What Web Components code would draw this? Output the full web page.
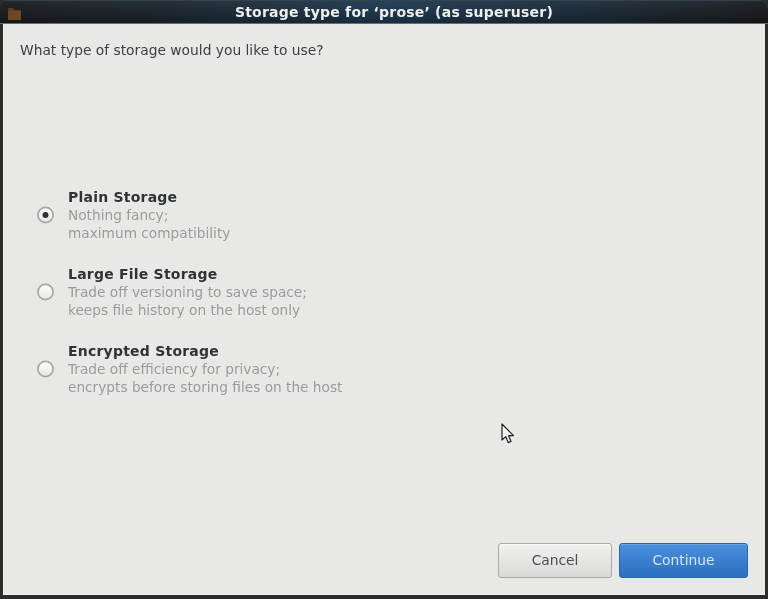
<!DOCTYPE html>
<html>
<head>
<meta charset="utf-8">
<title>Storage type</title>
<style>
  html, body { margin: 0; height: 100%; background: #2c2c2c; overflow: hidden; }
  body { font-family: "DejaVu Sans", sans-serif; }
  dialog-window, mouse-pointer { filter: blur(0.35px); }
</style>
</head>
<body>
<dialog-window heading="Storage type for ‘prose’ (as superuser)">
  <span slot="question">What type of storage would you like to use?</span>
  <storage-option checked label="Plain Storage">
    <span>Nothing fancy;</span>
    <span>maximum compatibility</span>
  </storage-option>
  <storage-option label="Large File Storage">
    <span>Trade off versioning to save space;</span>
    <span>keeps file history on the host only</span>
  </storage-option>
  <storage-option label="Encrypted Storage">
    <span>Trade off efficiency for privacy;</span>
    <span>encrypts before storing files on the host</span>
  </storage-option>
  <push-button slot="actions" style="width:114px">Cancel</push-button>
  <push-button slot="actions" primary style="width:129px">Continue</push-button>
</dialog-window>
<mouse-pointer></mouse-pointer>

<script>
// title bar with the little folder icon
class TitleBar extends HTMLElement {
  constructor() {
    super();
    const shadow = this.attachShadow({ mode: 'open' });
    shadow.innerHTML = `
      <style>
        :host {
          display: flex;
          align-items: center;
          justify-content: center;
          position: relative;
          height: 24px;
          padding-left: 20px;
          box-sizing: border-box;
          border-radius: 6px 8px 0 0;
          background:
            linear-gradient(rgba(255, 255, 255, 0.05), rgba(0, 0, 0, 0.25)),
            linear-gradient(90deg, #1a1c1e 0%, #1b2630 22%, #1e3a54 50%, #1c2d3c 75%, #191b1d 100%);
          box-shadow: inset 0 1px 0 #34444f, inset 0 -1px 0 #6b6e6e;
          color: #eeeeec;
          font: bold 14px "DejaVu Sans", sans-serif;
          letter-spacing: 0.22px;
        }
        svg { position: absolute; left: 7px; top: 6px; }
      </style>
      <svg width="15" height="15" viewBox="0 0 15 15">
        <path d="M1 2h5l1.500 2H14v10H1z" fill="#5c3d20"/>
        <path d="M1 5h13v9H1z" fill="#6d4822"/>
      </svg>
      <span></span>`;
  }

  set heading(text) {
    this.shadowRoot.querySelector('span').textContent = text;
  }
}
customElements.define('title-bar', TitleBar);

const windowTemplate = document.createElement('template');
windowTemplate.innerHTML = `
  <style>
    :host {
      display: block;
      box-sizing: border-box;
      height: 599px;
      background: #2c2c2c;
    }
    .body {
      box-sizing: border-box;
      height: 571px;
      margin: 0 3px;
      padding: 18px 17px 17px 17px;
      display: flex;
      flex-direction: column;
      background: #e8e8e7;
      box-shadow: inset 0 -1px 0 #f4f4f3, inset 1px 0 0 #f2f2f1;
      color: #3a4144;
      font: 13.8px "DejaVu Sans", sans-serif;
    }
    .question { line-height: 17px; height: 17px; }
    .options {
      flex: 1;
      display: flex;
      flex-direction: column;
      gap: 23px;
      padding: 129px 0 0 16px;
    }
    .actions { display: flex; justify-content: flex-end; gap: 7px; }
  </style>
  <title-bar></title-bar>
  <div class="body">
    <div class="question"><slot name="question"></slot></div>
    <div class="options"><slot></slot></div>
    <div class="actions"><slot name="actions"></slot></div>
  </div>
`;

class DialogWindow extends HTMLElement {
  constructor() {
    super();
    const shadow = this.attachShadow({ mode: 'open' });
    shadow.appendChild(windowTemplate.content.cloneNode(true));
    shadow.querySelector('title-bar').heading = this.getAttribute('heading');
  }
}
customElements.define('dialog-window', DialogWindow);

class StorageOption extends HTMLElement {
  constructor() {
    super();
    const shadow = this.attachShadow({ mode: 'open' });
    const dot = this.hasAttribute('checked') ? '<circle cx="9.500" cy="9" r="3" fill="#2e3436"/>' : '';
    shadow.innerHTML = `
      <style>
        :host { display: flex; align-items: center; gap: 14px; }
        svg { flex: none; width: 18px; height: 18px; }
        .text { display: flex; flex-direction: column; line-height: 18px; }
        .label { font-size: 14px; font-weight: bold; color: #2e3436; letter-spacing: 0.22px; }
        .note { display: flex; flex-direction: column; color: #9a9c9c; font-size: 13.7px; }
        ::slotted(span) { display: block; }
      </style>
      <svg viewBox="0 0 18 18">
        <defs>
          <linearGradient id="fill" x1="0" y1="0" x2="0" y2="1">
            <stop offset="0" stop-color="#ffffff"/>
            <stop offset="1" stop-color="#e4e4e2"/>
          </linearGradient>
        </defs>
        <circle cx="9.500" cy="9" r="7.600" fill="url(#fill)" stroke="#a6a8a6" stroke-width="1.700"/>
        ${dot}
      </svg>
      <div class="text">
        <span class="label"></span>
        <div class="note"><slot></slot></div>
      </div>`;
    shadow.querySelector('.label').textContent = this.getAttribute('label');
  }
}
customElements.define('storage-option', StorageOption);

class PushButton extends HTMLElement {
  constructor() {
    super();
    const shadow = this.attachShadow({ mode: 'open' });
    shadow.innerHTML = `
      <style>
        :host {
          display: flex;
          align-items: center;
          justify-content: center;
          box-sizing: border-box;
          height: 35px;
          padding-bottom: 2px;
          border-radius: 3px;
          border: 1px solid #a9aaa8;
          background: linear-gradient(#f1f1f0, #d9d9d7);
          box-shadow: inset 0 1px 0 #fafafa;
          color: #4a5052;
          font: 13.8px "DejaVu Sans", sans-serif;
        }
        :host([primary]) {
          border-color: #2a68ad;
          background: linear-gradient(#4a90dc, #2b6fc0);
          box-shadow: inset 0 1px 0 #6aa5e4;
          color: #d6e6f6;
        }
      </style>
      <slot></slot>`;
  }
}
customElements.define('push-button', PushButton);

// screenshot happened to catch the pointer, it floats over the dialog
class MousePointer extends HTMLElement {
  constructor() {
    super();
    this.attachShadow({ mode: 'open' }).innerHTML = `
      <style>
        :host { position: absolute; left: 501px; top: 423px; width: 14px; height: 22px; }
      </style>
      <svg width="14" height="22" viewBox="0 0 14 22">
        <path d="M1 1v16l3.700-3.400 2.500 6 2.800-1.200-2.500-5.800h5z" fill="#f4f4f4" stroke="#222" stroke-width="1.200" stroke-linejoin="round"/>
      </svg>`;
  }
}
customElements.define('mouse-pointer', MousePointer);
</script>
</body>
</html>
